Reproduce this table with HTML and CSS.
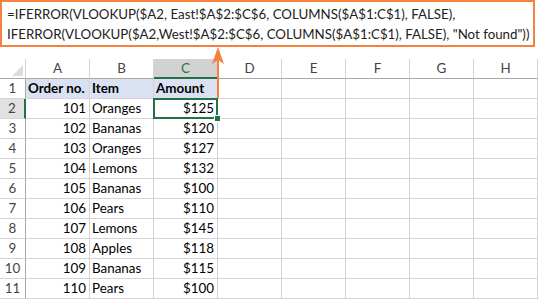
FILE: index.html
```html
<!DOCTYPE html>
<html>
<head>
<meta charset="utf-8">
<link rel="stylesheet" href="styles.css">
</head>
<body>
<div class="page">
  <div class="formula">
    <div class="fline">=IFERROR(VLOOKUP($A2, East!$A$2:$C$6, COLUMNS($A$1:C$1), FALSE),</div>
    <div class="fline">IFERROR(VLOOKUP($A2,West!$A$2:$C$6, COLUMNS($A$1:C$1), FALSE), "Not found"))</div>
  </div>
  <div class="sheet">
    <div class="corner"><span class="tri"></span></div>
    <div class="ch">A</div><div class="ch">B</div><div class="ch sel">C</div><div class="ch">D</div><div class="ch">E</div><div class="ch">F</div><div class="ch">G</div><div class="ch">H</div>

    <div class="rh">1</div><div class="c hd">Order no.</div><div class="c hd">Item</div><div class="c hd">Amount</div><div class="c"></div><div class="c"></div><div class="c"></div><div class="c"></div><div class="c"></div>
    <div class="rh sel">2</div><div class="c n">101</div><div class="c">Oranges</div><div class="c n active">$125<span class="handle"></span></div><div class="c"></div><div class="c"></div><div class="c"></div><div class="c"></div><div class="c"></div>
    <div class="rh">3</div><div class="c n">102</div><div class="c">Bananas</div><div class="c n">$120</div><div class="c"></div><div class="c"></div><div class="c"></div><div class="c"></div><div class="c"></div>
    <div class="rh">4</div><div class="c n">103</div><div class="c">Oranges</div><div class="c n">$127</div><div class="c"></div><div class="c"></div><div class="c"></div><div class="c"></div><div class="c"></div>
    <div class="rh">5</div><div class="c n">104</div><div class="c">Lemons</div><div class="c n">$132</div><div class="c"></div><div class="c"></div><div class="c"></div><div class="c"></div><div class="c"></div>
    <div class="rh">6</div><div class="c n">105</div><div class="c">Bananas</div><div class="c n">$100</div><div class="c"></div><div class="c"></div><div class="c"></div><div class="c"></div><div class="c"></div>
    <div class="rh">7</div><div class="c n">106</div><div class="c">Pears</div><div class="c n">$110</div><div class="c"></div><div class="c"></div><div class="c"></div><div class="c"></div><div class="c"></div>
    <div class="rh">8</div><div class="c n">107</div><div class="c">Lemons</div><div class="c n">$145</div><div class="c"></div><div class="c"></div><div class="c"></div><div class="c"></div><div class="c"></div>
    <div class="rh">9</div><div class="c n">108</div><div class="c">Apples</div><div class="c n">$118</div><div class="c"></div><div class="c"></div><div class="c"></div><div class="c"></div><div class="c"></div>
    <div class="rh">10</div><div class="c n">109</div><div class="c">Bananas</div><div class="c n">$115</div><div class="c"></div><div class="c"></div><div class="c"></div><div class="c"></div><div class="c"></div>
    <div class="rh">11</div><div class="c n">110</div><div class="c">Pears</div><div class="c n">$100</div><div class="c"></div><div class="c"></div><div class="c"></div><div class="c"></div><div class="c"></div>
  </div>
  <svg class="arrow" width="16" height="54" viewBox="0 0 16 54">
    <line x1="8" y1="12" x2="8" y2="52" stroke="#f5813f" stroke-width="2"/>
    <polygon points="8,1 2,18 8,14 14,18" fill="#f5813f"/>
  </svg>
</div>
</body>
</html>
```

FILE: styles.css
```css
html, body {
  margin: 0;
  padding: 0;
  background: #ffffff;
}
.page {
  position: relative;
  width: 538px;
  height: 299px;
  overflow: hidden;
  font-family: Lato, "Open Sans", sans-serif;
  font-size: 13.4px;
  color: #000;
}
.formula {
  box-sizing: border-box;
  width: 535px;
  height: 47px;
  border: 2px solid #f5813f;
  padding: 2px 0 0 5px;
  font-size: 13.3px;
  color: #222;
}
.fline {
  height: 20px;
  line-height: 21px;
  white-space: nowrap;
}
.sheet {
  margin-top: 12px;
  display: grid;
  grid-template-columns: 26px repeat(8, 64px);
  grid-auto-rows: 20px;
}
.corner, .ch, .rh, .c {
  box-sizing: border-box;
  white-space: nowrap;
  overflow: hidden;
}
.corner {
  position: relative;
  border-right: 1px solid #d4d4d4;
  border-bottom: 1px solid #a8a8a8;
}
.tri {
  position: absolute;
  right: 2px;
  bottom: 2px;
  width: 0;
  height: 0;
  border-left: 11px solid transparent;
  border-bottom: 11px solid #dcdcdc;
}
.ch {
  text-align: center;
  line-height: 19px;
  color: #444;
  border-right: 1px solid #d4d4d4;
  border-bottom: 1px solid #a8a8a8;
}
.ch.sel {
  background: #d2d2d2;
  color: #217346;
  border-bottom: 2px solid #217346;
}
.rh {
  text-align: center;
  line-height: 19px;
  color: #444;
  border-right: 1px solid #a8a8a8;
  border-bottom: 1px solid #d4d4d4;
}
.rh.sel {
  background: #e1e1e1;
  border-right: 2px solid #217346;
}
.c {
  position: relative;
  line-height: 19px;
  padding: 0 3px 0 2px;
  border-right: 1px solid #d4d4d4;
  border-bottom: 1px solid #d4d4d4;
  overflow: visible;
}
.c.n {
  text-align: right;
}
.c.hd {
  background: #d9e1f2;
  font-weight: bold;
}
.c.active::after {
  content: "";
  position: absolute;
  left: -1px;
  top: -1px;
  right: -1px;
  bottom: -1px;
  border: 2px solid #217346;
}
.handle {
  position: absolute;
  right: -4px;
  bottom: -4px;
  width: 5px;
  height: 5px;
  background: #217346;
  border: 1px solid #fff;
  z-index: 2;
}
.arrow {
  position: absolute;
  left: 210px;
  top: 46px;
}
```
